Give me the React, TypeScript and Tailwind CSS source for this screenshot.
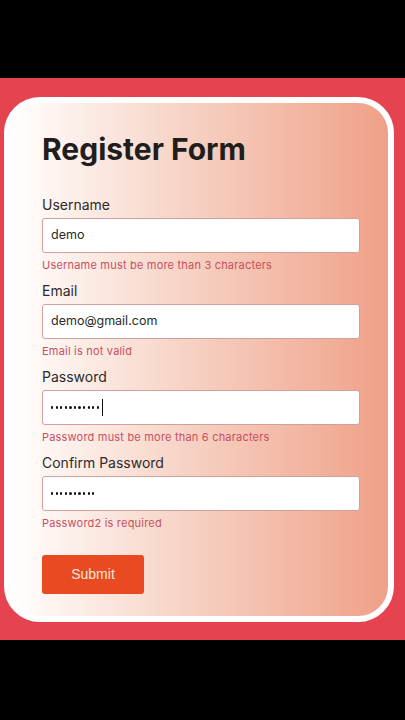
import React from 'react';

interface Field {
  label: string;
  value: string;
  error: string;
  secret?: boolean;
  focused?: boolean;
}

const fields: Field[] = [
  { label: 'Username', value: 'demo', error: 'Username must be more than 3 characters' },
  { label: 'Email', value: 'demo@gmail.com', error: 'Email is not valid' },
  { label: 'Password', value: 'xxxxxxxxxxx', error: 'Password must be more than 6 characters', secret: true, focused: true },
  { label: 'Confirm Password', value: 'xxxxxxxxxx', error: 'Password2 is required', secret: true },
];

const FormField: React.FC<{ field: Field }> = ({ field }) => {
  return (
    <div className="flex flex-col">
      <label className="h-[20px] text-[14px] leading-[20px] text-[#2e2a2a]">{field.label}</label>
      <div className="mt-[3px] flex h-[35px] items-center rounded-[3px] border border-[#d2a09a] bg-white pl-[8px]">
        {field.secret ? (
          <div className="flex items-center gap-[2.4px]">
            {field.value.split('').map((_, i) => (
              <span key={i} className="h-[2.2px] w-[2.2px] rounded-full bg-[#111]" />
            ))}
            {field.focused && <span className="ml-[1px] h-[17px] w-[1px] bg-[#111]" />}
          </div>
        ) : (
          <span className="text-[12.5px] text-[#2a2a2a]">{field.value}</span>
        )}
      </div>
      <p className="mt-[4px] h-[16px] text-[11px] leading-[16px] tracking-[0.2px] text-[#c8505f]">{field.error}</p>
    </div>
  );
};

export default function App() {
  return (
    <div className="flex h-[720px] w-[405px] flex-col bg-black font-['Inter',sans-serif]">
      <div className="h-[78px]" />
      <div className="h-[562px] bg-[#e4434f] pl-[4px] pr-[11px] pt-[19px]">
        <div className="h-[525px] rounded-[36px] border-[6px] border-white bg-gradient-to-r from-white via-[#f6cfc0] to-[#efa088] pl-[32px] pr-[28px] pt-[28px]">
          <h1 className="h-[36px] text-[30px] font-bold leading-[36px] text-[#211d1d]">Register Form</h1>
          <div className="mt-[28px] flex flex-col gap-[8px]">
            {fields.map(f => (
              <FormField key={f.label} field={f} />
            ))}
          </div>
          <button className="mt-[24px] h-[39px] w-[102px] rounded-[3px] bg-[#e84b22] font-['Liberation_Sans',sans-serif] text-[14px] text-[#fde6dc]">
            Submit
          </button>
        </div>
      </div>
      <div className="h-[80px]" />
    </div>
  );
}
